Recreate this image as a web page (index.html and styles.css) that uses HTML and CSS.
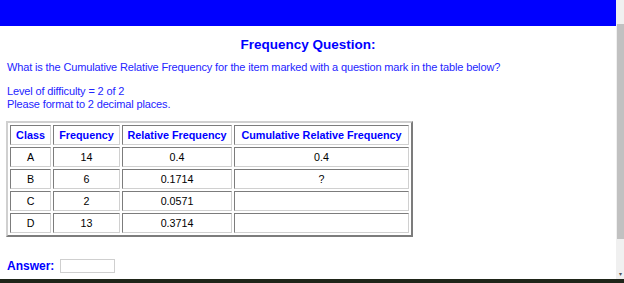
FILE: index.html
```html
<!DOCTYPE html>
<html>
<head>
<meta charset="utf-8">
<link rel="stylesheet" href="styles.css">
</head>
<body>
<div class="window">
  <div class="viewport">
    <div class="topbar"></div>
    <div class="content">
      <h1 class="title">Frequency Question:</h1>
      <p class="question">What is the Cumulative Relative Frequency for the item marked with a question mark in the table below?</p>
      <p class="info">Level of difficulty = 2 of 2<br>Please format to 2 decimal places.</p>
      <table class="freq">
        <tr><th class="col-class">Class</th><th class="col-freq">Frequency</th><th class="col-rel">Relative Frequency</th><th class="col-cum">Cumulative Relative Frequency</th></tr>
        <tr><td>A</td><td>14</td><td>0.4</td><td>0.4</td></tr>
        <tr><td>B</td><td>6</td><td>0.1714</td><td>?</td></tr>
        <tr><td>C</td><td>2</td><td>0.0571</td><td></td></tr>
        <tr><td>D</td><td>13</td><td>0.3714</td><td></td></tr>
      </table>
      <div class="answer"><label class="answer-label">Answer:</label><input class="answer-input" type="text"></div>
    </div>
  </div>
  <div class="scrollbar">
    <div class="thumb"></div>
    <div class="arrow">&#9662;</div>
  </div>
</div>
<div class="taskbar"></div>
</body>
</html>
```
FILE: styles.css
```css
html, body {
  margin: 0;
  padding: 0;
  overflow: hidden;
  background: #fff;
  font-family: "Liberation Sans", Arial, sans-serif;
}
.window {
  display: flex;
  height: 279px;
}
.viewport {
  width: 616px;
  overflow: hidden;
}
.topbar {
  height: 26px;
  background: #0000ff;
}
.content {
  padding: 0 7px;
}
.title {
  margin: 10px 0 0;
  font-size: 13.5px;
  font-weight: bold;
  color: #0000ff;
  text-align: center;
  line-height: 17px;
}
.question {
  margin: 7px 0 0;
  font-size: 11px;
  letter-spacing: -0.14px;
  line-height: 14px;
  color: #2424ff;
}
.info {
  margin: 11px 0 0;
  font-size: 11px;
  letter-spacing: -0.14px;
  line-height: 13px;
  color: #2424ff;
}
.freq {
  margin-top: 10px;
  margin-left: -1px;
  border: 2px outset #d0d0d0;
  border-spacing: 2px;
  font-size: 10.7px;
}
.freq th, .freq td {
  border: 1px inset #d0d0d0;
  height: 18px;
  padding: 0;
  text-align: center;
}
.freq th {
  font-size: 10.8px;
  font-weight: bold;
  color: #0000ff;
}
.freq td {
  color: #000;
}
.freq .col-class { width: 39px; }
.freq .col-freq { width: 65px; }
.freq .col-rel { width: 108px; }
.freq .col-cum { width: 173px; }
.answer {
  margin-top: 22px;
  display: flex;
  align-items: center;
}
.answer-label {
  font-size: 12px;
  font-weight: bold;
  color: #0000ff;
  margin-right: 6px;
}
.answer-input {
  width: 53px;
  height: 12px;
  padding: 0;
  border: 1px solid #cfcfcf;
  margin: 0;
}
.scrollbar {
  width: 8px;
  background: #f0f0f0;
  position: relative;
}
.thumb {
  position: absolute;
  left: 1px;
  right: 0;
  top: 24px;
  height: 215px;
  background: #c1c1c1;
}
.arrow {
  position: absolute;
  left: 0;
  right: 0;
  top: 270px;
  font-size: 6px;
  text-align: center;
  color: #505050;
}
.taskbar {
  height: 4px;
  background: #1f2519;
}
```
